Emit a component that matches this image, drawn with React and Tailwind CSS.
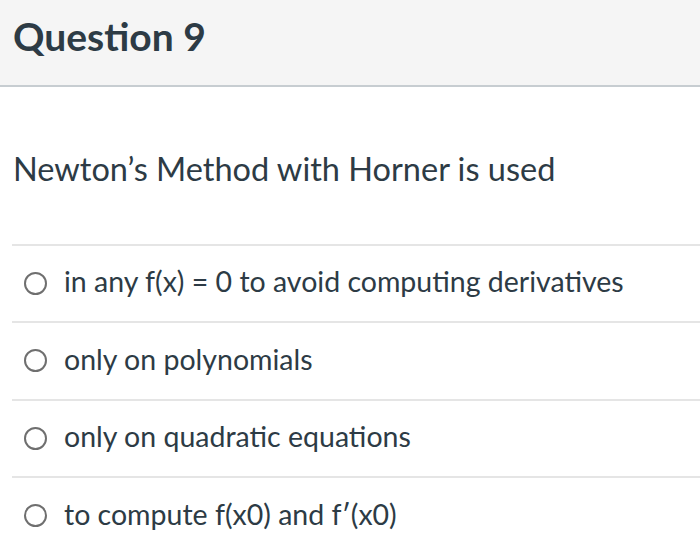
import React from 'react';

const OPTIONS = [
    'in any f(x) = 0 to avoid computing derivatives',
    'only on polynomials',
    'only on quadratic equations',
    'to compute f(x0) and f\u2032(x0)',
];

export default function App() {
    return (
        <div className="w-[700px] h-[551px] bg-white overflow-hidden text-[#2d3b45]" style={{ fontFamily: 'Lato, "Open Sans", sans-serif' }}>
            {/* Header */}
            <div className="h-[87px] bg-[#f5f5f5] border-b-2 border-[#c7cdd1] px-[13px] flex items-center">
                <h1 className="text-[39px] font-bold leading-none pb-[12px]">Question 9</h1>
            </div>

            <div className="pl-[12px]">
                <p className="text-[32.5px] leading-none pt-[66px] pb-[58px] pl-[1px]">Newton’s Method with Horner is used</p>

                <div>
                    {OPTIONS.map((opt) => (
                        <div key={opt} className="h-[77.5px] border-t-2 border-[#e5e5e5] flex items-center">
                            <span className="ml-[12px] w-[23px] h-[23px] rounded-full border-2 border-[#6f6f6f] bg-white shrink-0" />
                            <span className="ml-[17px] text-[28.5px] leading-none pb-[4px]">{opt}</span>
                        </div>
                    ))}
                </div>
            </div>
        </div>
    );
}
